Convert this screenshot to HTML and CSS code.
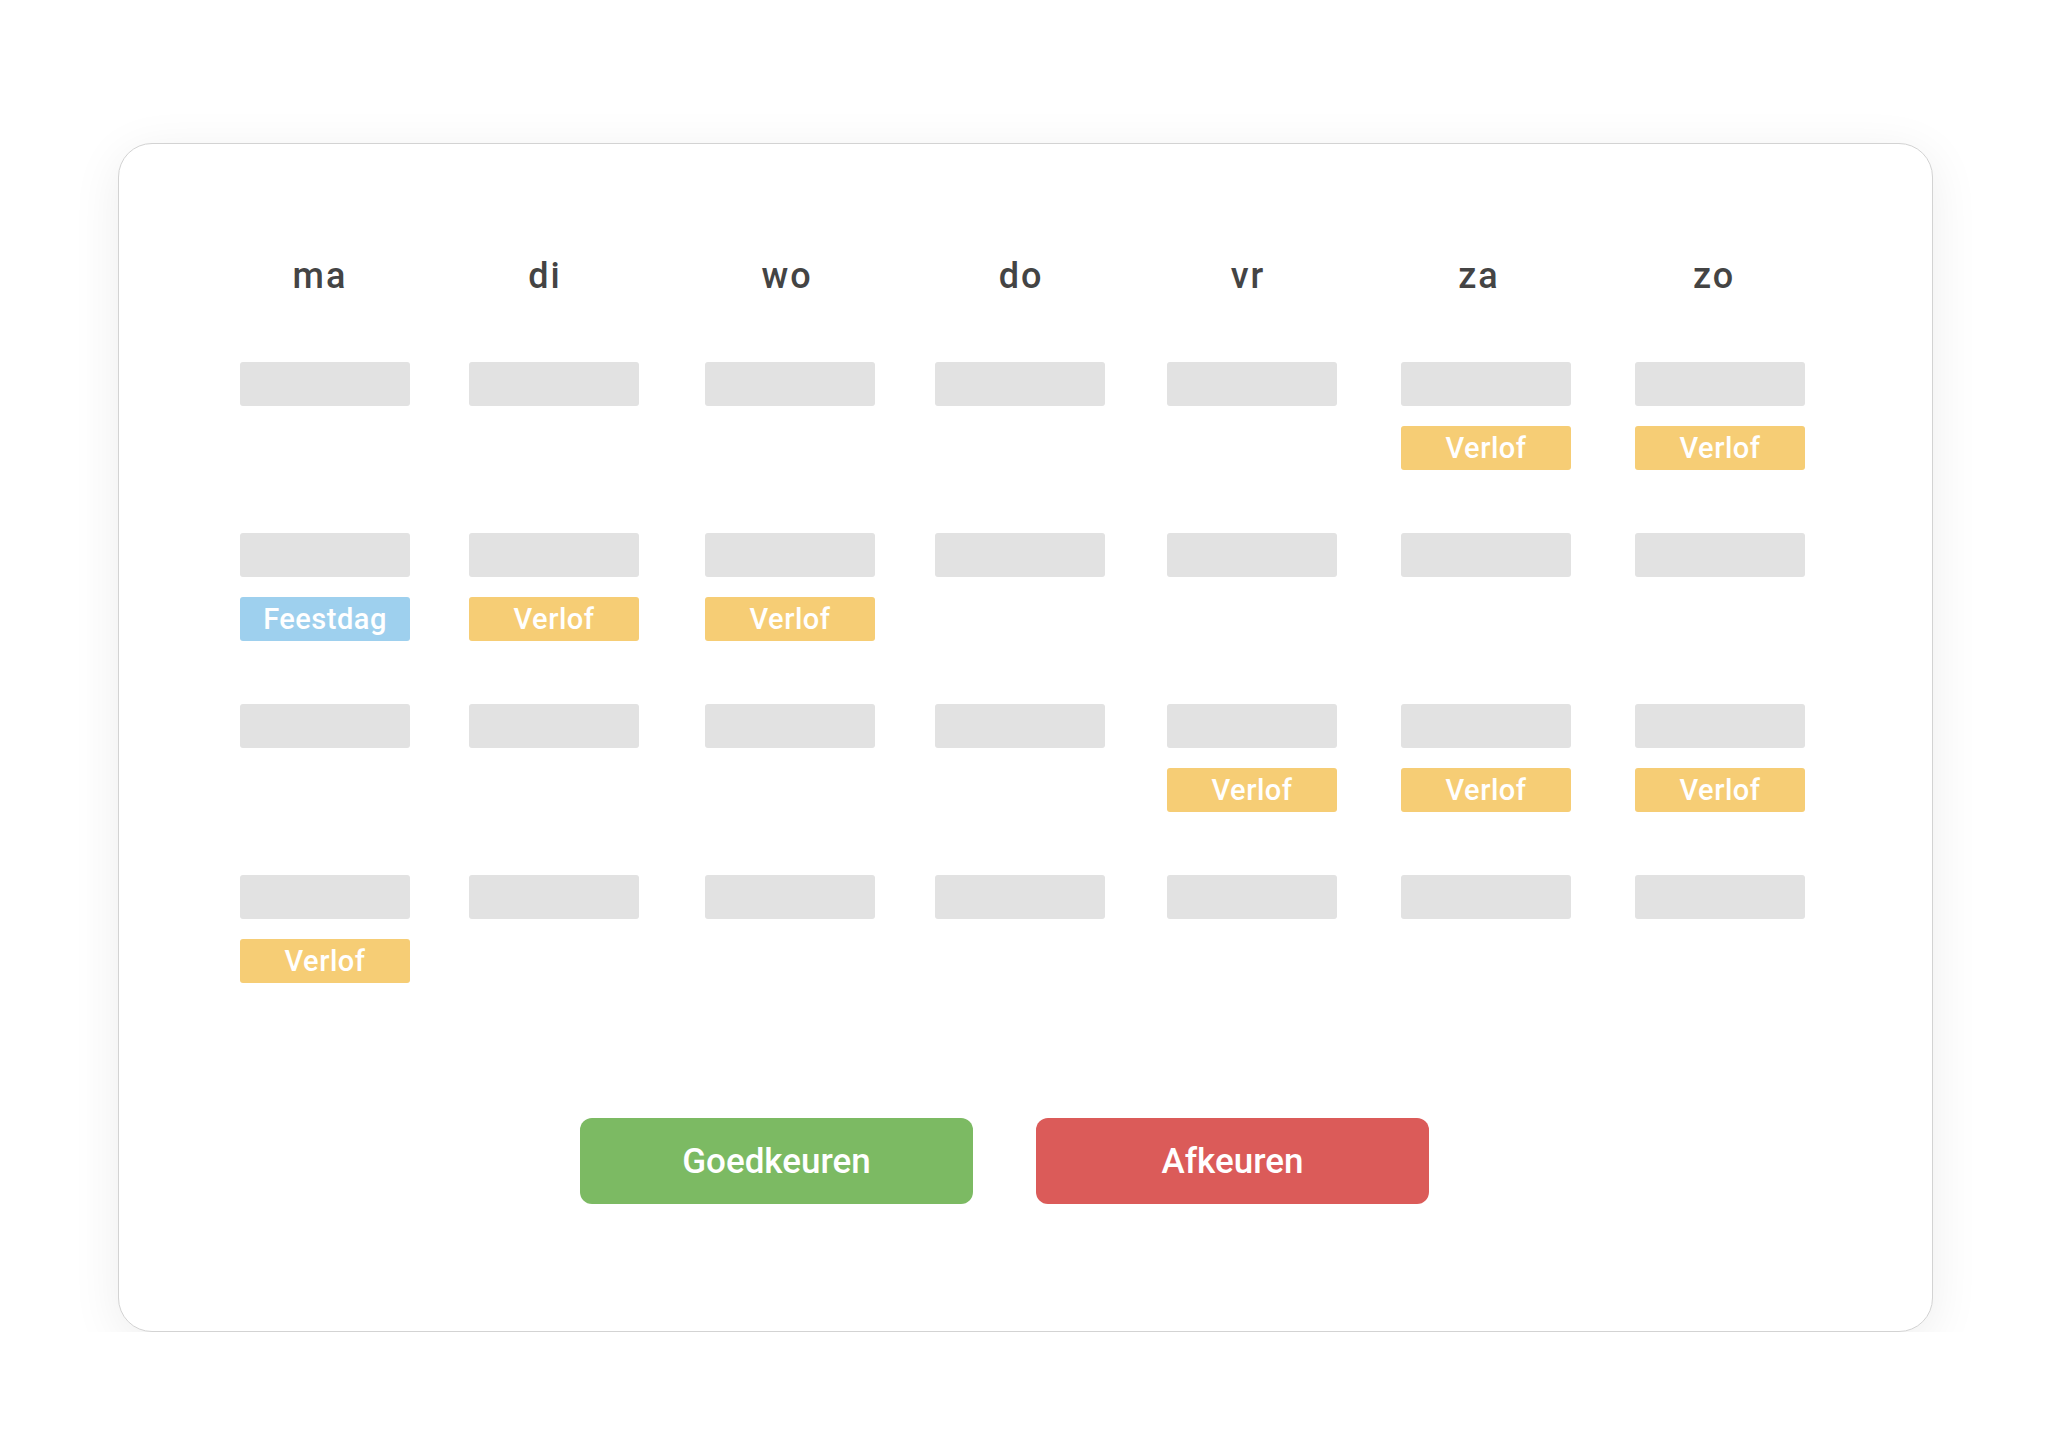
FILE: index.html
```html
<!DOCTYPE html>
<html lang="nl">
<head>
<meta charset="utf-8">
<title>Verlof</title>
<link rel="stylesheet" href="styles.css">
</head>
<body>
<div class="card">
  <div class="days">
    <div class="day-name">ma</div>
    <div class="day-name">di</div>
    <div class="day-name">wo</div>
    <div class="day-name">do</div>
    <div class="day-name">vr</div>
    <div class="day-name">za</div>
    <div class="day-name">zo</div>
  </div>
  <div class="weeks">
    <div class="day"><div class="slot"></div></div>
    <div class="day"><div class="slot"></div></div>
    <div class="day"><div class="slot"></div></div>
    <div class="day"><div class="slot"></div></div>
    <div class="day"><div class="slot"></div></div>
    <div class="day"><div class="slot"></div><div class="tag leave">Verlof</div></div>
    <div class="day"><div class="slot"></div><div class="tag leave">Verlof</div></div>

    <div class="day"><div class="slot"></div><div class="tag holiday">Feestdag</div></div>
    <div class="day"><div class="slot"></div><div class="tag leave">Verlof</div></div>
    <div class="day"><div class="slot"></div><div class="tag leave">Verlof</div></div>
    <div class="day"><div class="slot"></div></div>
    <div class="day"><div class="slot"></div></div>
    <div class="day"><div class="slot"></div></div>
    <div class="day"><div class="slot"></div></div>

    <div class="day"><div class="slot"></div></div>
    <div class="day"><div class="slot"></div></div>
    <div class="day"><div class="slot"></div></div>
    <div class="day"><div class="slot"></div></div>
    <div class="day"><div class="slot"></div><div class="tag leave">Verlof</div></div>
    <div class="day"><div class="slot"></div><div class="tag leave">Verlof</div></div>
    <div class="day"><div class="slot"></div><div class="tag leave">Verlof</div></div>

    <div class="day"><div class="slot"></div><div class="tag leave">Verlof</div></div>
    <div class="day"><div class="slot"></div></div>
    <div class="day"><div class="slot"></div></div>
    <div class="day"><div class="slot"></div></div>
    <div class="day"><div class="slot"></div></div>
    <div class="day"><div class="slot"></div></div>
    <div class="day"><div class="slot"></div></div>
  </div>
  <div class="actions">
    <button class="btn approve">Goedkeuren</button>
    <button class="btn reject">Afkeuren</button>
  </div>
</div>
</body>
</html>
```

FILE: styles.css
```css
html, body {
  margin: 0;
  padding: 0;
  background: #ffffff;
}

body {
  padding: 143px 0 0 118px;
  font-family: Roboto, "Liberation Sans", Arial, sans-serif;
}

.card {
  box-sizing: border-box;
  width: 1815px;
  height: 1189px;
  border: 1px solid #d3d3d3;
  border-radius: 34px;
  background: #ffffff;
  box-shadow: 0 10px 50px rgba(0, 0, 0, 0.075);
  padding: 114px 0 0 121px;
}

.days {
  display: grid;
  grid-template-columns: 225px 242px 234px 227px 231px 235px 170px;
  margin-left: -6px;
  height: 36px;
}

.day-name {
  width: 170px;
  text-align: center;
  font-size: 36px;
  line-height: 36px;
  font-weight: 500;
  letter-spacing: 2px;
  text-indent: 2px;
  color: #444444;
}

.weeks {
  display: grid;
  grid-template-columns: 229px 236px 230px 232px 234px 234px 170px;
  grid-auto-rows: 109px;
  row-gap: 62px;
  margin-top: 68px;
}

.day {
  width: 170px;
  display: flex;
  flex-direction: column;
  gap: 20px;
}

.slot {
  height: 44px;
  border-radius: 3px;
  background: #e2e2e2;
}

.tag {
  height: 44px;
  border-radius: 3px;
  color: #ffffff;
  font-size: 29px;
  line-height: 44px;
  font-weight: 500;
  letter-spacing: 0.5px;
  text-align: center;
}

.leave {
  background: #f6cd75;
}

.holiday {
  background: #9ed0ee;
}

.actions {
  display: flex;
  gap: 63px;
  margin-top: 134px;
  padding-left: 340px;
}

.btn {
  width: 393px;
  height: 86px;
  border: none;
  border-radius: 12px;
  color: #ffffff;
  font-family: Roboto, "Liberation Sans", Arial, sans-serif;
  font-size: 35px;
  font-weight: 500;
  padding: 0;
  cursor: pointer;
}

.approve {
  background: #7cba63;
}

.reject {
  background: #db5b59;
}
```
